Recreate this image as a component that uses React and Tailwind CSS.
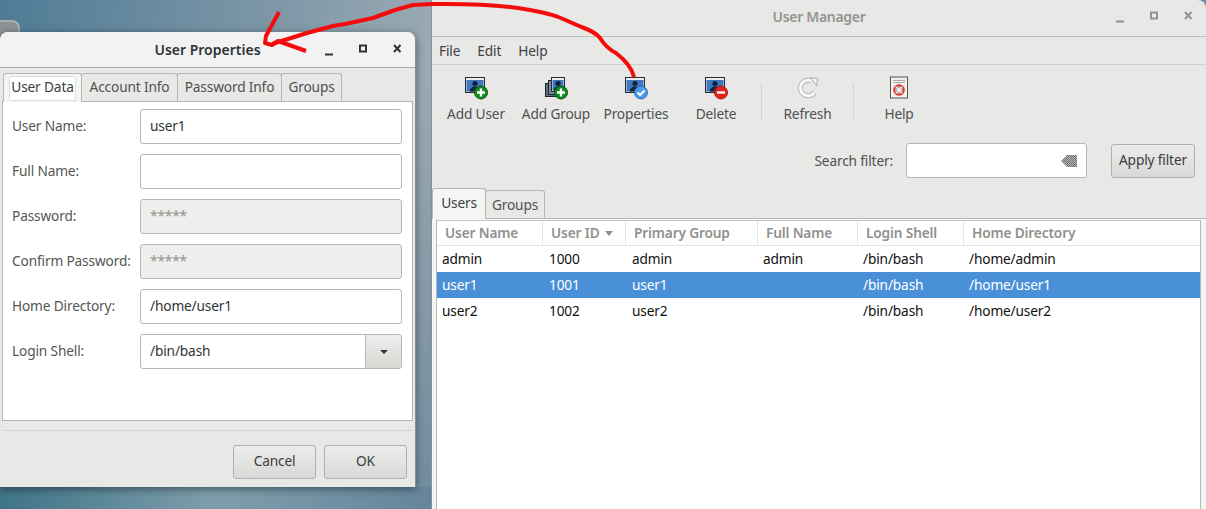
import React from "react";

const Frame = ({ stack }) => (
  <>
    {stack && (
      <>
        <rect x="1.5" y="7.5" width="13" height="13" fill="#5c6f86" stroke="#222" />
        <rect x="4.5" y="4.5" width="14" height="14" fill="#7b8aa0" stroke="#222" />
      </>
    )}
    <rect x={stack ? 7.5 : 1.5} y="1.5" width={stack ? 13 : 19} height={stack ? 14 : 15} fill="#e9edf2" stroke="#2b2b2b" />
    <rect x={stack ? 8.5 : 2.5} y="4" width={stack ? 11 : 17} height={stack ? 10.5 : 11.5} fill="#3f78c0" />
    <circle cx={stack ? 14 : 11} cy="7.5" r="2.6" fill="#10233f" />
    <path d={stack ? "M9.5 14.5c.5-3 2.5-4 4.5-4s4 1 4.500 4z" : "M5.500 15.500c.7-3.800 3-5 5.500-5s4.800 1.200 5.500 5z"} fill="#10233f" />
  </>
);

const Badge = ({ color, edge, children }) => (
  <>
    <circle cx="17" cy="16.500" r="6.500" fill={color} stroke={edge} />
    {children}
  </>
);

const Plus = () => <path d="M17 12.500v8M13 16.500h8" stroke="#fff" strokeWidth="2.400" />;

const UserIcon = ({ kind }) => (
  <svg width="24" height="24" viewBox="0 0 24 24">
    <Frame stack={kind === "group"} />
    {(kind === "user" || kind === "group") && (
      <Badge color="#0f8a1c" edge="#0a5c12">
        <Plus />
      </Badge>
    )}
    {kind === "props" && (
      <Badge color="#4a9be8" edge="#2a6cb0">
        <path d="M13.500 16.500l2.500 2.500 4.500-4.500" stroke="#fff" strokeWidth="2" fill="none" />
      </Badge>
    )}
    {kind === "delete" && (
      <Badge color="#e0261c" edge="#a81a12">
        <path d="M13 16.500h8" stroke="#fff" strokeWidth="2.400" />
      </Badge>
    )}
  </svg>
);

const RefreshIcon = () => (
  <svg width="22" height="22" viewBox="0 0 22 22" fill="none">
    <path d="M17.500 15.500A7.800 7.800 0 1 1 15.500 4.500" stroke="#a9a9a7" strokeWidth="5" />
    <path d="M17.500 15.500A7.800 7.800 0 1 1 15.500 4.500" stroke="#f6f6f5" strokeWidth="3.400" />
    <path d="M13.500 .8l7 .7-.7 7.500z" fill="#f6f6f5" stroke="#a9a9a7" />
  </svg>
);

const HelpIcon = () => (
  <svg width="20" height="24" viewBox="0 0 20 24" fill="none">
    <rect x="1.500" y="1" width="17" height="21" fill="#f2f0ec" stroke="#555" />
    <path d="M4 4.500h12M4 6.500h12" stroke="#a9a9a5" />
    <circle cx="10" cy="14" r="4.700" stroke="#d8332c" strokeWidth="2.200" />
    <path d="M6.700 10.700l1.400 1.400M13.300 10.700l-1.400 1.400M6.700 17.300l1.400-1.400M13.300 17.300l-1.400-1.400" stroke="#f2f0ec" strokeWidth="1.500" />
    <circle cx="10" cy="14" r="2.600" stroke="#999" strokeWidth=".8" />
  </svg>
);

const ToolItem = ({ icon, label, w }) => (
  <div className={`flex flex-col items-center ${w}`}>
    <div className="h-[24px] flex items-center">{icon}</div>
    <span className="mt-[4px] leading-[20px]">{label}</span>
  </div>
);

const WinButtons = ({ color }) => (
  <svg width="78" height="14" viewBox="0 0 78 14" fill="none" stroke={color}>
    <path d="M0 11.500h8" strokeWidth="2" />
    <rect x="35" y="2.500" width="6" height="6" strokeWidth="2" />
    <path d="M69 2l6.500 7M75.500 2l-6.500 7" strokeWidth="2" />
  </svg>
);

const Field = ({ label, value, disabled, combo }) => (
  <div className="flex items-center h-[35px] mb-[10px]">
    <span className="w-[129px] pl-[1px] pb-[2px] text-[#555753]">{label}</span>
    <div
      className={`flex-1 h-[35px] flex items-center pl-[9px] rounded-[3px] border border-[#b6b6b3] overflow-hidden ${
        disabled ? "bg-[#eeeeec] text-[#92948f]" : "bg-white text-[#2e3436]"
      }`}
    >
      <span className="flex-1 pb-[2px]">{value}</span>
      {combo && (
        <div className="w-[36px] h-[35px] border-l border-[#b6b6b3] bg-gradient-to-b from-[#eeeeec] to-[#d8d8d5] flex items-center justify-center">
          <div className="w-0 h-0 border-x-[4px] border-x-transparent border-t-[4px] border-t-[#2e3436]" />
        </div>
      )}
    </div>
  </div>
);

const Tab = ({ children, w }) => (
  <div className={`${w} h-[28px] pb-[2px] flex items-center justify-center whitespace-nowrap bg-[#e8e8e7] border border-b-0 border-[#b6b6b3] -ml-px rounded-t-[3px] text-[#4f5250]`}>
    {children}
  </div>
);

const Btn = ({ children, w }) => (
  <div className={`${w} h-[34px] pb-[2px] flex items-center justify-center rounded-[3px] border border-[#b0b0ad] bg-gradient-to-b from-[#ececeb] to-[#d9d9d7] text-[#3a3d3e]`}>
    {children}
  </div>
);

const cols = [
  ["User Name", "w-[106px]", "pl-[8px]"],
  ["User ID", "w-[83px]", "pl-[8px]"],
  ["Primary Group", "w-[132px]", "pl-[8px]"],
  ["Full Name", "w-[100px]", "pl-[8px]"],
  ["Login Shell", "w-[106px]", "pl-[8px]"],
  ["Home Directory", "flex-1", "pl-[8px]"],
];

const rows = [
  ["admin", "1000", "admin", "admin", "/bin/bash", "/home/admin"],
  ["user1", "1001", "user1", "", "/bin/bash", "/home/user1"],
  ["user2", "1002", "user2", "", "/bin/bash", "/home/user2"],
];

const cellW = ["w-[106px] pl-[5px]", "w-[83px] pl-[6px]", "w-[132px] pl-[6px]", "w-[100px] pl-[5px]", "w-[106px] pl-[5px]", "flex-1 pl-[5px]"];

export default function App() {
  return (
    <div
      className="relative w-[1206px] h-[509px] overflow-hidden text-[13.7px] tracking-[-0.15px] leading-none bg-[linear-gradient(100deg,#4f7b96_0%,#7f98a8_22%,#9aaab3_34%,#6d8ba0_40%)]"
      style={{ fontFamily: '"Noto Sans", "Open Sans", sans-serif' }}
    >
      <div className="absolute left-0 top-[20px] w-[20px] h-[16px] rounded-tr-[8px] bg-[#8b9294] border-t-2 border-r-2 border-[#a9afb0]" />
      <div className="absolute left-0 top-[487px] w-[432px] h-[22px] bg-[linear-gradient(90deg,#3f7488,#7f9eac_50%,#65859c)]" />

      {/* User Properties dialog */}
      <div className="absolute left-0 top-[32px] w-[416px] h-[455px] flex flex-col bg-[#e8e8e7] rounded-t-[8px] border-r border-[#8c8f90] shadow-[0_2px_8px_rgba(0,0,0,0.45)]">
        <div className="relative h-[36px] shrink-0 flex items-center justify-center bg-[#f2f2f2] rounded-t-[8px] border-b border-[#a8a8a6]">
          <span className="font-semibold text-[#2e3436] text-[14px] tracking-normal">User Properties</span>
          <div className="absolute left-[325px] top-[11px]">
            <WinButtons color="#2e3436" />
          </div>
        </div>
        <div className="flex pl-[3px] pt-[4px] h-[33px] shrink-0 items-end">
          <div className="w-[79px] h-[29px] -mb-px z-10 bg-[#f5f5f4] border border-b-0 border-[#b6b6b3] rounded-t-[3px] flex items-center justify-center">
            <span className="w-[67px] h-[25px] pb-[2px] flex items-center justify-center whitespace-nowrap border border-[#dcdcdb] rounded-[2px] bg-white text-[#3b3e3f]">User Data</span>
          </div>
          <Tab w="w-[97px]">Account Info</Tab>
          <Tab w="w-[105px]">Password Info</Tab>
          <Tab w="w-[61px]">Groups</Tab>
        </div>
        <div className="mx-[2px] h-[320px] shrink-0 bg-white border border-[#b6b6b3] pt-[7px] pl-[8px] pr-[10px]">
          <Field label="User Name:" value="user1" />
          <Field label="Full Name:" value="" />
          <Field label="Password:" value="*****" disabled />
          <Field label="Confirm Password:" value="*****" disabled />
          <Field label="Home Directory:" value="/home/user1" />
          <Field label="Login Shell:" value="/bin/bash" combo />
        </div>
        <div className="mx-[2px] mt-[9px] border-t border-[#d3d3d1]" />
        <div className="flex justify-end gap-[8px] pr-[8px] pt-[14px]">
          <Btn w="w-[83px]">Cancel</Btn>
          <Btn w="w-[83px]">OK</Btn>
        </div>
      </div>

      {/* User Manager window */}
      <div className="absolute left-[431px] top-0 w-[775px] h-[509px] flex flex-col bg-[#e8e8e7] rounded-tr-[8px] border-l border-[#8c8f90]">
        <div className="relative h-[37px] pb-[2px] shrink-0 flex items-center justify-center border-b border-[#bdbdbb]">
          <span className="font-semibold text-[#92948f] text-[14px] tracking-[-0.3px]">User Manager</span>
          <div className="absolute left-[684px] top-[10px]">
            <WinButtons color="#92948f" />
          </div>
        </div>
        <div className="h-[28px] shrink-0 flex items-center gap-[17px] pl-[7px] border-b border-[#d0d0ce] text-[#3f4243]">
          <span>File</span>
          <span>Edit</span>
          <span>Help</span>
        </div>
        <div className="h-[78px] shrink-0 flex items-start pt-[11px] text-[#4f5250]">
          <ToolItem w="w-[80px] ml-[4px]" icon={<UserIcon kind="user" />} label="Add User" />
          <ToolItem w="w-[80px]" icon={<UserIcon kind="group" />} label="Add Group" />
          <ToolItem w="w-[80px]" icon={<UserIcon kind="props" />} label="Properties" />
          <ToolItem w="w-[80px]" icon={<UserIcon kind="delete" />} label="Delete" />
          <div className="w-px h-[36px] mt-[7px] bg-[#d3d3d1] ml-[5px]" />
          <ToolItem w="w-[91px]" icon={<RefreshIcon />} label="Refresh" />
          <div className="w-px h-[36px] mt-[7px] bg-[#d3d3d1]" />
          <ToolItem w="w-[90px]" icon={<HelpIcon />} label="Help" />
        </div>
        <div className="h-[35px] shrink-0 flex items-center justify-end pr-[11px] text-[#4f5250]">
          <span className="mr-[13px]">Search filter:</span>
          <div className="w-[181px] h-[35px] bg-white border border-[#b6b6b3] rounded-[3px] flex items-center justify-end pr-[9px] mr-[24px]">
            <svg width="16" height="12" viewBox="0 0 16 12">
              <defs>
                <pattern id="hatch" width="2" height="2" patternUnits="userSpaceOnUse">
                  <rect width="2" height="2" fill="#b5b5b3" />
                  <rect width="1" height="1" fill="#6f6f6d" />
                  <rect x="1" y="1" width="1" height="1" fill="#6f6f6d" />
                </pattern>
              </defs>
              <path d="M0 6L6 0h10v12H6z" fill="url(#hatch)" />
            </svg>
          </div>
          <Btn w="w-[84px]">Apply filter</Btn>
        </div>
        <div className="flex h-[31px] mt-[9px] shrink-0 items-end">
          <div className="w-[54px] h-[31px] pb-[2px] -mb-px z-10 bg-[#f5f5f4] border border-b-0 border-[#b6b6b3] rounded-t-[3px] flex items-center justify-center text-[#3b3e3f]">Users</div>
          <div className="w-[60px] h-[28px] bg-[#e8e8e7] border border-b-0 border-[#b6b6b3] rounded-t-[3px] flex items-center justify-center text-[#4f5250] -ml-px">Groups</div>
        </div>
        <div className="flex-1 border-t border-[#b6b6b3] bg-[#f5f5f4] pl-[4px] pr-[5px] pt-[1px]">
          <div className="h-full bg-white border-l border-r border-[#b6b6b3]">
            <div className="flex h-[26px] border-t border-[#c8c8c6] border-b border-b-[#e4e4e3]">
              {cols.map(([label, w, p], i) => (
                <div key={label} className={`${w} ${p} flex items-center font-semibold text-[#8f918d] ${i < 5 ? "border-r border-[#e6e6e5]" : ""}`}>
                  {label}
                  {label === "User ID" && <span className="ml-[5px] w-0 h-0 border-x-[4.500px] border-x-transparent border-t-[5px] border-t-[#8f918d]" />}
                </div>
              ))}
            </div>
            {rows.map((r, ri) => (
              <div key={r[0]} className={`flex h-[26px] items-center ${ri === 1 ? "bg-[#4a90d9] text-white" : "text-[#111]"}`}>
                {r.map((c, i) => (
                  <div key={i} className={cellW[i]}>{c}</div>
                ))}
              </div>
            ))}
          </div>
        </div>
      </div>

      {/* Red annotation strokes */}
      <svg className="absolute inset-0 pointer-events-none" width="1206" height="509" fill="none" stroke="#f40b0b" strokeWidth="4" strokeLinejoin="round" strokeLinecap="butt">
        <path d="M279 12L266 36L265 43L272 45L278 41L306 51" />
        <path d="M272 44L307 33L333 26L345 24L373 18L395 10L413 5L432 4C470 3.500 505 5 530 10C550 14 555 15 570 22C585 29 595 31 600 38C605 46 610 50 616 53C625 60 632 68 634 77" />
      </svg>
    </div>
  );
}
